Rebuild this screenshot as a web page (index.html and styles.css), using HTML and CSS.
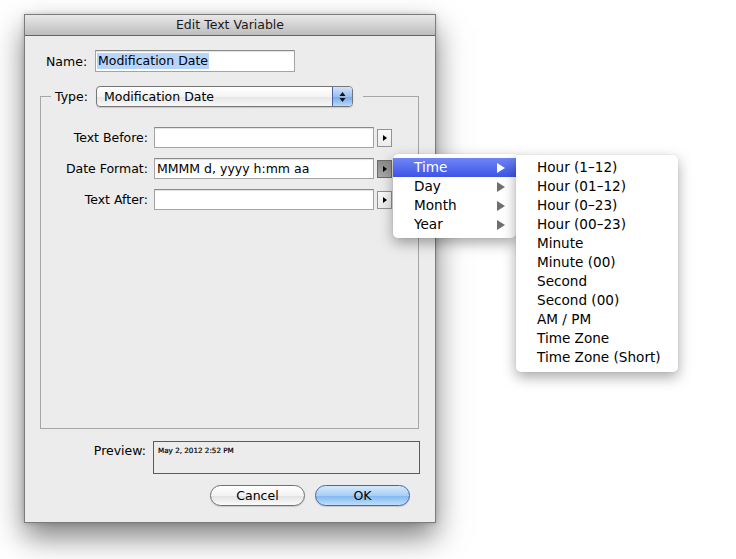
FILE: index.html
```html
<!DOCTYPE html>
<html lang="en">
<head>
    <meta charset="UTF-8">
    <title>Edit Text Variable</title>
    <link rel="stylesheet" href="styles.css">
</head>
<body>
    <div class="window">
        <div class="titlebar">Edit Text Variable</div>
        <div class="content">
            <div class="name-row">
                <span class="name-label">Name:</span>
                <div class="field name-field"><span class="selected">Modification Date</span></div>
            </div>

            <fieldset class="group">
                <legend class="group-legend">
                    <span class="type-label">Type:</span>
                    <div class="popup">
                        <span class="popup-text">Modification Date</span>
                        <span class="popup-arrows">
                            <svg width="7" height="12" viewBox="0 0 7 12">
                                <path d="M3.5 1 L6.5 5 L0.5 5 Z" fill="#111"/>
                                <path d="M3.5 11 L6.5 7 L0.5 7 Z" fill="#111"/>
                            </svg>
                        </span>
                    </div>
                </legend>
                <div class="rows">
                    <div class="row">
                        <span class="row-label">Text Before:</span>
                        <div class="field row-field"></div>
                        <div class="insert-btn"><span class="tri"></span></div>
                    </div>
                    <div class="row">
                        <span class="row-label">Date Format:</span>
                        <div class="field row-field">MMMM d, yyyy h:mm aa</div>
                        <div class="insert-btn pressed"><span class="tri"></span></div>
                    </div>
                    <div class="row">
                        <span class="row-label">Text After:</span>
                        <div class="field row-field"></div>
                        <div class="insert-btn"><span class="tri"></span></div>
                    </div>
                </div>
            </fieldset>

            <div class="preview-row">
                <span class="preview-label">Preview:</span>
                <div class="preview-box">May 2, 2012 2:52 PM</div>
            </div>

            <div class="buttons">
                <button class="btn">Cancel</button>
                <button class="btn btn-default">OK</button>
            </div>
        </div>
    </div>

    <div class="menu menu-main">
        <div class="menu-item active">Time<span class="sub-arrow"></span></div>
        <div class="menu-item">Day<span class="sub-arrow"></span></div>
        <div class="menu-item">Month<span class="sub-arrow"></span></div>
        <div class="menu-item">Year<span class="sub-arrow"></span></div>
    </div>

    <div class="menu menu-sub">
        <div class="menu-item">Hour (1–12)</div>
        <div class="menu-item">Hour (01–12)</div>
        <div class="menu-item">Hour (0–23)</div>
        <div class="menu-item">Hour (00–23)</div>
        <div class="menu-item">Minute</div>
        <div class="menu-item">Minute (00)</div>
        <div class="menu-item">Second</div>
        <div class="menu-item">Second (00)</div>
        <div class="menu-item">AM / PM</div>
        <div class="menu-item">Time Zone</div>
        <div class="menu-item">Time Zone (Short)</div>
    </div>
</body>
</html>
```

FILE: styles.css
```css
* {
    box-sizing: border-box;
}

body {
    margin: 0;
    width: 736px;
    height: 559px;
    background-color: #fff;
    font-family: "DejaVu Sans", Verdana, sans-serif;
    font-size: 12.5px;
    color: #000;
    overflow: hidden;
}

.window {
    margin: 14px 0 0 24px;
    width: 412px;
    height: 509px;
    background-color: #ececec;
    border: 1px solid #7c7c7c;
    box-shadow: 0 14px 28px rgba(0, 0, 0, 0.5), 0 0 5px rgba(0, 0, 0, 0.18);
}

.titlebar {
    height: 21px;
    line-height: 20px;
    text-align: center;
    color: #1a1a1a;
    background: linear-gradient(#e8e8e8, #d3d3d3 50%, #bdbdbd);
    border-bottom: 1px solid #636363;
}

.content {
    padding: 14px 0 0 21px;
}

.name-row {
    display: flex;
    align-items: center;
    height: 22px;
}

.name-label {
    width: 49px;
}

.field {
    background-color: #fff;
    border: 1px solid #a4a4a4;
    border-top-color: #8a8a8a;
    box-shadow: inset 0 1px 1px rgba(0, 0, 0, 0.12);
    white-space: nowrap;
}

.name-field {
    width: 200px;
    height: 22px;
    padding: 2px 1px;
    line-height: 16px;
}

.selected {
    display: inline-block;
    background-color: #b5d5ff;
    padding: 0 1px;
}

.group {
    margin: 14px 16px 0 -6px;
    padding: 0;
    border: 1px solid #a6a6a6;
    min-width: 0;
}

.group-legend {
    display: flex;
    align-items: center;
    margin-left: 10px;
    padding: 0 10px 0 4px;
}

.type-label {
    width: 41px;
}

.popup {
    display: flex;
    width: 257px;
    height: 21px;
    border: 1px solid #767676;
    border-radius: 4px;
    overflow: hidden;
    background: linear-gradient(#ffffff, #f4f4f4 50%, #e6e6e6 52%, #f7f7f7);
    box-shadow: 0 1px 1px rgba(0, 0, 0, 0.15);
}

.popup-text {
    flex: 1;
    padding-left: 7px;
    line-height: 19px;
}

.popup-arrows {
    width: 20px;
    display: flex;
    align-items: center;
    justify-content: center;
    border-left: 1px solid #4b5ea8;
    background: linear-gradient(#d0e3f9, #98c0f0 50%, #74a9ec 52%, #b8d8fb);
}

.rows {
    height: 321px;
    padding-top: 20px;
    display: flex;
    flex-direction: column;
    gap: 10px;
}

.row {
    display: flex;
    align-items: center;
    height: 21px;
}

.row-label {
    width: 107px;
    text-align: right;
    margin-right: 6px;
}

.row-field {
    width: 220px;
    height: 21px;
    padding: 0 2px;
    line-height: 19px;
}

.insert-btn {
    width: 15px;
    height: 18px;
    margin-left: 3px;
    display: flex;
    align-items: center;
    justify-content: center;
    border: 1px solid #929292;
    background: linear-gradient(#fafafa, #ececec);
}

.insert-btn.pressed {
    border-color: #6c6c6c;
    background: linear-gradient(#8c8c8c, #a8a8a8);
}

.tri {
    width: 0;
    height: 0;
    margin-left: 1px;
    border-top: 3.5px solid transparent;
    border-bottom: 3.5px solid transparent;
    border-left: 4px solid #000;
}

.preview-row {
    display: flex;
    margin-top: 12px;
}

.preview-label {
    width: 100px;
    text-align: right;
    margin-right: 7px;
    padding-top: 2px;
}

.preview-box {
    width: 267px;
    height: 33px;
    border: 1px solid #5a5a5a;
    padding: 3px 4px;
    font-size: 7.2px;
    line-height: 11px;
    -webkit-text-stroke: 0.2px #000;
}

.buttons {
    display: flex;
    justify-content: flex-end;
    gap: 10px;
    margin: 11px 25px 0 0;
}

.btn {
    width: 95px;
    height: 21px;
    padding: 0;
    font-family: inherit;
    font-size: 12.5px;
    color: #000;
    border: 1px solid #707070;
    border-radius: 11px;
    background: linear-gradient(#ffffff, #f3f3f3 50%, #e2e2e2 52%, #fbfbfb);
    box-shadow: 0 1px 1px rgba(0, 0, 0, 0.15);
}

.btn-default {
    border-color: #4a64a4;
    background: linear-gradient(#d6e9fc, #a8cef5 50%, #82b8f0 52%, #bddffc);
}

.menu {
    position: absolute;
    background-color: rgba(255, 255, 255, 0.97);
    font-size: 13.6px;
    color: #000;
    box-shadow: 0 5px 14px rgba(0, 0, 0, 0.35), 0 0 1px rgba(0, 0, 0, 0.25);
}

.menu-main {
    left: 393px;
    top: 154px;
    width: 123px;
    padding: 4px 0;
    border-radius: 5px 0 5px 5px;
}

.menu-sub {
    left: 516px;
    top: 155px;
    width: 162px;
    padding: 3px 0 5px;
    border-radius: 0 5px 5px 5px;
}

.menu-item {
    position: relative;
    height: 19px;
    line-height: 19px;
    padding-left: 21px;
    white-space: nowrap;
}

.menu-item.active {
    color: #fff;
    background: linear-gradient(#7086f5, #3c55e6);
}

.sub-arrow {
    position: absolute;
    right: 11px;
    top: 5px;
    width: 0;
    height: 0;
    border-top: 5px solid transparent;
    border-bottom: 5px solid transparent;
    border-left: 8px solid #6e6e6e;
}

.menu-item.active .sub-arrow {
    border-left-color: #fff;
}
```
